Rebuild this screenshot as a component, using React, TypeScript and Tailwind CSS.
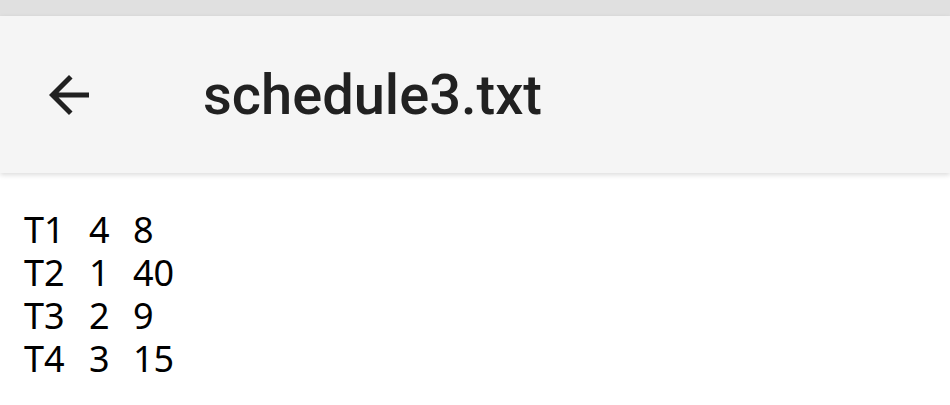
import React from 'react';

const rows: [string, string, string][] = [
  ['T1', '4', '8'],
  ['T2', '1', '40'],
  ['T3', '2', '9'],
  ['T4', '3', '15'],
];

export default function App() {
  return (
    <div className="w-[950px] h-[405px] bg-white overflow-hidden">
      {/* status strip */}
      <div className="h-[16px] bg-[#e0e0e0]" />

      {/* app bar */}
      <div className="relative h-[157px] bg-[#f5f5f5] flex items-center shadow-[0_2px_5px_rgba(0,0,0,0.14)]">
        <div className="w-[60px] h-[60px] ml-[39px] flex items-center justify-center">
          <svg viewBox="0 0 24 24" className="w-[60px] h-[60px]" fill="#212121">
            <path d="M20 11H7.83l5.59-5.59L12 4l-8 8 8 8 1.41-1.41L7.83 13H20v-2z" />
          </svg>
        </div>
        <h1
          className="ml-[104px] text-[56px] font-medium text-[#212121] leading-none"
          style={{ fontFamily: 'Roboto, sans-serif' }}
        >
          schedule3.txt
        </h1>
      </div>

      {/* file contents */}
      <div
        className="pt-[35px] pl-[24px] text-[36px] text-black leading-[43px]"
        style={{ fontFamily: '"Noto Sans", sans-serif' }}
      >
        {rows.map((r) => (
          <div key={r[0]} className="grid grid-cols-[65px_44px_auto]">
            <span>{r[0]}</span>
            <span>{r[1]}</span>
            <span>{r[2]}</span>
          </div>
        ))}
      </div>
    </div>
  );
}
